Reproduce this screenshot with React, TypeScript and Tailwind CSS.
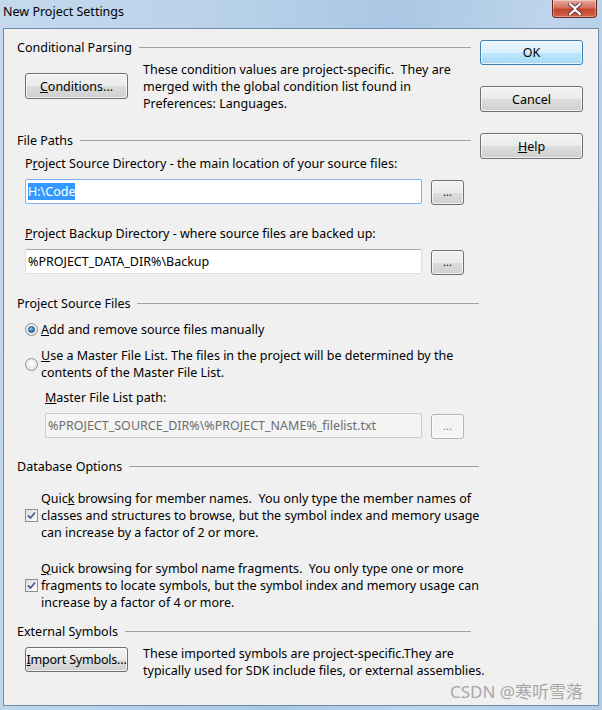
import type { ReactNode } from 'react'

const FONT = { fontFamily: '"Noto Sans", "Noto Sans CJK SC", sans-serif' }

function WinButton({
  children,
  className = '',
  focused = false,
  disabled = false,
}: {
  children: ReactNode
  className?: string
  focused?: boolean
  disabled?: boolean
}) {
  let skin =
    'border-[#707070] bg-[linear-gradient(#f2f2f2_0%,#ebebeb_50%,#dddddd_51%,#cfcfcf_100%)] text-black'
  if (focused)
    skin =
      'border-[#3c7fb1] bg-[linear-gradient(#eaf6fd_0%,#d9f0fc_50%,#bee6fd_51%,#a7d9f5_100%)] text-black shadow-[inset_0_0_0_1px_#c8e6f8]'
  if (disabled) skin = 'border-[#adb2b5] bg-[#f4f4f4] text-[#838383]'
  return (
    <div
      className={`flex items-center justify-center whitespace-nowrap rounded-[3px] border shadow-[inset_0_0_0_1px_rgba(255,255,255,0.7)] ${skin} ${className}`}
    >
      {children}
    </div>
  )
}

function GroupHeader({ title, lineEnd }: { title: string; lineEnd: string }) {
  return (
    <div className={`flex h-[17px] items-center pl-[13px] ${lineEnd}`}>
      <span className="whitespace-nowrap">{title}</span>
      <div className="ml-[7px] h-px flex-1 bg-[#a0a0a0]" />
    </div>
  )
}

function Radio({ checked }: { checked: boolean }) {
  return (
    <div className="flex h-[13px] w-[13px] shrink-0 items-center justify-center rounded-full border border-[#8e8f8f] bg-[radial-gradient(circle_at_50%_40%,#ffffff,#dadada)]">
      {checked && (
        <div className="h-[7px] w-[7px] rounded-full border border-[#1b4d7a] bg-[radial-gradient(circle_at_40%_35%,#8fd3ff,#1c70b5_70%)]" />
      )}
    </div>
  )
}

function Checkbox() {
  return (
    <div className="flex h-[13px] w-[13px] shrink-0 items-center justify-center border border-[#8e8f8f] bg-[linear-gradient(135deg,#dcdcdc,#ffffff)]">
      <svg width="9" height="9" viewBox="0 0 9 9">
        <path d="M1 4.5 L3.5 7 L8 1.5" fill="none" stroke="#4a5f97" strokeWidth="1.8" />
      </svg>
    </div>
  )
}

function TextBox({
  children,
  focused = false,
  disabled = false,
  width = 'w-[397px]',
}: {
  children: ReactNode
  focused?: boolean
  disabled?: boolean
  width?: string
}) {
  const skin = disabled
    ? 'border-[#c9ccd0] bg-[#f4f4f4] text-[#6d6d6d]'
    : focused
      ? 'border-[#7eb4ea] bg-white text-black'
      : 'border-[#dbdfe6] border-t-[#abadb3] bg-white text-black'
  return (
    <div
      className={`flex h-[25px] items-center overflow-hidden whitespace-nowrap rounded-[2px] border pl-[2px] ${width} ${skin}`}
    >
      {children}
    </div>
  )
}

function PathRow({
  children,
  focused,
  disabled,
  width,
}: {
  children: ReactNode
  focused?: boolean
  disabled?: boolean
  width?: string
}) {
  return (
    <div className="flex items-start">
      <TextBox focused={focused} disabled={disabled} width={width}>
        {children}
      </TextBox>
      <WinButton disabled={disabled} className="ml-[9px] mt-px h-[25px] w-[33px] text-[11px] leading-none">
        <span className="-mt-[2px]">...</span>
      </WinButton>
    </div>
  )
}

export default function App() {
  return (
    <div
      className="relative flex h-[710px] w-[602px] flex-col overflow-hidden bg-[linear-gradient(100deg,#c5d9ee_0%,#b9d2ea_30%,#a9c7e4_55%,#bdd4eb_75%,#b3cce6_100%)] text-[12.5px] leading-[17px] text-black"
      style={FONT}
    >
      {/* Title bar */}
      <div className="flex h-[28px] shrink-0 items-start">
        <span className="ml-[3px] mt-[3px] text-[12.5px] text-[#000]">New Project Settings</span>
        <div className="ml-auto mr-[5px] flex h-[18px] w-[45px] items-center justify-center rounded-b-[4px] border border-t-0 border-[#6b2a1e] bg-[linear-gradient(#e7a99d_0%,#d5705e_45%,#c2432c_55%,#d2664a_100%)] shadow-[inset_0_0_0_1px_rgba(255,255,255,0.35)]">
          <svg width="14" height="12" viewBox="0 0 14 12">
            <path
              d="M2 1 L7 5.2 L12 1 M2 11 L7 6.8 L12 11"
              fill="none"
              stroke="#4a2a2a"
              strokeWidth="4"
              strokeLinecap="square"
            />
            <path
              d="M2 1 L7 5.2 L12 1 M2 11 L7 6.8 L12 11"
              fill="none"
              stroke="#ffffff"
              strokeWidth="2.2"
              strokeLinecap="square"
            />
          </svg>
        </div>
      </div>

      {/* Client area */}
      <div className="mx-[3px] mb-[4px] flex flex-1 border border-[#6f8aa6] bg-[#f0f0f0]">
        <div className="flex w-[476px] flex-col">
          {/* Conditional Parsing */}
          <div className="mt-[10px]">
            <GroupHeader title="Conditional Parsing" lineEnd="w-[467px]" />
          </div>
          <div className="mt-[5px] flex">
            <WinButton className="ml-[21px] mt-[12px] h-[26px] w-[103px] shrink-0">
              <span>
                <u>C</u>onditions...
              </span>
            </WinButton>
            <p className="ml-[15px] w-[330px]">
              These condition values are project-specific.&nbsp; They are merged with the global condition
              list found in Preferences: Languages.
            </p>
          </div>

          {/* File Paths */}
          <div className="mt-[20px]">
            <GroupHeader title="File Paths" lineEnd="w-[467px]" />
          </div>
          <div className="ml-[21px] mt-[6px]">
            P<u>r</u>oject Source Directory - the main location of your source files:
          </div>
          <div className="ml-[21px] mt-[7px]">
            <PathRow focused>
              <span className="bg-[#3399ff] text-white">H:\Code</span>
            </PathRow>
          </div>
          <div className="ml-[21px] mt-[20px]">
            <u>P</u>roject Backup Directory - where source files are backed up:
          </div>
          <div className="ml-[21px] mt-[7px]">
            <PathRow>%PROJECT_DATA_DIR%\Backup</PathRow>
          </div>

          {/* Project Source Files */}
          <div className="mt-[20px]">
            <GroupHeader title="Project Source Files" lineEnd="w-[475px]" />
          </div>
          <div className="ml-[21px] mt-[9px] flex items-center gap-[3px]">
            <Radio checked />
            <span>
              <u>A</u>dd and remove source files manually
            </span>
          </div>
          <div className="ml-[21px] mt-[9px] flex items-center gap-[3px]">
            <Radio checked={false} />
            <span className="w-[420px]">
              <u>U</u>se a Master File List. The files in the project will be determined by the contents of the
              Master File List.
            </span>
          </div>
          <div className="ml-[41px] mt-[8px]">
            <u>M</u>aster File List path:
          </div>
          <div className="ml-[41px] mt-[7px]">
            <PathRow disabled width="w-[377px]">
              %PROJECT_SOURCE_DIR%\%PROJECT_NAME%_filelist.txt
            </PathRow>
          </div>

          {/* Database Options */}
          <div className="mt-[19px]">
            <GroupHeader title="Database Options" lineEnd="w-[475px]" />
          </div>
          <div className="ml-[21px] mt-[15px] flex items-center gap-[3px]">
            <Checkbox />
            <span className="w-[450px]">
              Quic<u>k</u> browsing for member names.&nbsp; You only type the member names of classes and
              structures to browse, but the symbol index and memory usage can increase by a factor of 2 or more.
            </span>
          </div>
          <div className="ml-[21px] mt-[19px] flex items-center gap-[3px]">
            <Checkbox />
            <span className="w-[450px]">
              <u>Q</u>uick browsing for symbol name fragments.&nbsp; You only type one or more fragments to
              locate symbols, but the symbol index and memory usage can increase by a factor of 4 or more.
            </span>
          </div>

          {/* External Symbols */}
          <div className="mt-[12px]">
            <GroupHeader title="External Symbols" lineEnd="w-[467px]" />
          </div>
          <div className="mt-[5px] flex">
            <WinButton className="ml-[21px] mt-[2px] h-[25px] w-[103px] shrink-0 overflow-visible tracking-[-0.2px]">
              <span>
                <u>I</u>mport Symbols...
              </span>
            </WinButton>
            <p className="ml-[15px] whitespace-nowrap">
              These imported symbols are project-specific.They are
              <br />
              typically used for SDK include files, or external assemblies.
            </p>
          </div>
          <div className="flex-1" />
        </div>

        {/* Right button column */}
        <div className="flex flex-1 flex-col">
          <div className="mt-[11px] flex flex-col gap-[21px]">
            <WinButton focused className="h-[25px] w-[103px]">
              OK
            </WinButton>
            <WinButton className="h-[26px] w-[103px]">Cancel</WinButton>
            <WinButton className="h-[26px] w-[103px]">
              <span>
                <u>H</u>elp
              </span>
            </WinButton>
          </div>
          <div className="flex-1" />
          <div className="mb-[3px] ml-[-30px] whitespace-nowrap text-[17px] leading-[20px] text-[#a8a8a8]">
            CSDN @寒听雪落
          </div>
        </div>
      </div>
    </div>
  )
}
